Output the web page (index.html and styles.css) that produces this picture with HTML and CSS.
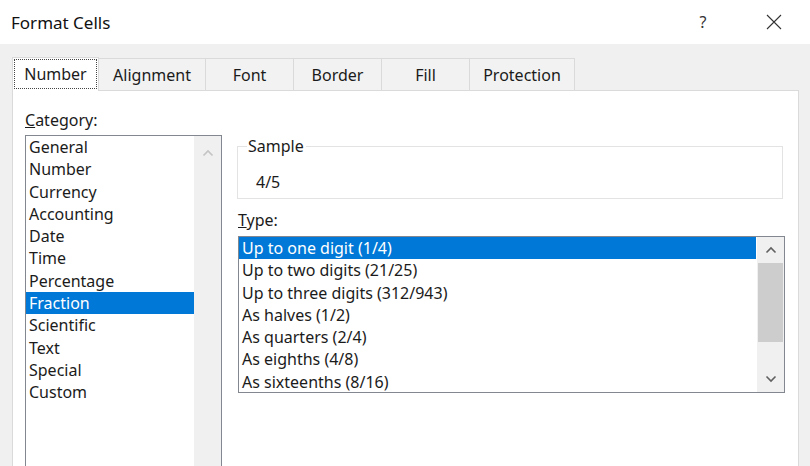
FILE: index.html
```html
<!DOCTYPE html>
<html>
<head>
<meta charset="utf-8">
<link rel="stylesheet" href="styles.css">
</head>
<body>
<div class="dialog">
  <div class="titlebar">
    <div class="title">Format Cells</div>
    <div class="help">?</div>
    <div class="close">
      <svg width="16" height="16" viewBox="0 0 16 16"><path d="M1 1 L15 15 M15 1 L1 15" stroke="#333" stroke-width="1.1" fill="none"/></svg>
    </div>
  </div>
  <div class="tabs">
    <div class="tab active">Number</div>
    <div class="tab w-align">Alignment</div>
    <div class="tab w-font">Font</div>
    <div class="tab w-border">Border</div>
    <div class="tab w-fill">Fill</div>
    <div class="tab w-prot">Protection</div>
  </div>
  <div class="panel">
    <div class="leftcol">
      <div class="label cat-label"><u>C</u>ategory:</div>
      <div class="listbox catlist">
        <div class="items">
          <div class="item">General</div>
          <div class="item">Number</div>
          <div class="item">Currency</div>
          <div class="item">Accounting</div>
          <div class="item">Date</div>
          <div class="item">Time</div>
          <div class="item">Percentage</div>
          <div class="item selected">Fraction</div>
          <div class="item">Scientific</div>
          <div class="item">Text</div>
          <div class="item">Special</div>
          <div class="item">Custom</div>
        </div>
        <div class="scrollbar">
          <div class="arrow">
            <svg width="12" height="8" viewBox="0 0 12 8"><path d="M1.5 6.5 L6 2 L10.5 6.5" stroke="#c4c4c4" stroke-width="1.6" fill="none"/></svg>
          </div>
        </div>
      </div>
    </div>
    <div class="rightcol">
      <fieldset class="sample">
        <legend>Sample</legend>
        <div class="sample-value">4/5</div>
      </fieldset>
      <div class="label type-label"><u>T</u>ype:</div>
      <div class="listbox typelist">
        <div class="items">
          <div class="item selected">Up to one digit (1/4)</div>
          <div class="item">Up to two digits (21/25)</div>
          <div class="item">Up to three digits (312/943)</div>
          <div class="item">As halves (1/2)</div>
          <div class="item">As quarters (2/4)</div>
          <div class="item">As eighths (4/8)</div>
          <div class="item">As sixteenths (8/16)</div>
        </div>
        <div class="scrollbar active-sb">
          <div class="arrow">
            <svg width="12" height="8" viewBox="0 0 12 8"><path d="M1.5 6.5 L6 2 L10.5 6.5" stroke="#606060" stroke-width="1.6" fill="none"/></svg>
          </div>
          <div class="track">
            <div class="thumb"></div>
          </div>
          <div class="arrow">
            <svg width="12" height="8" viewBox="0 0 12 8"><path d="M1.5 1.5 L6 6 L10.5 1.5" stroke="#606060" stroke-width="1.6" fill="none"/></svg>
          </div>
        </div>
      </div>
    </div>
  </div>
</div>
</body>
</html>
```
FILE: styles.css
```css
* { box-sizing: border-box; }
html, body {
  margin: 0;
  padding: 0;
}
body {
  width: 810px;
  height: 466px;
  overflow: hidden;
  background: #f0f0f0;
  font-family: "Noto Sans", "Open Sans", sans-serif;
  color: #1b1b1b;
}
.dialog {
  width: 810px;
  height: 466px;
  display: flex;
  flex-direction: column;
}
.titlebar {
  height: 44px;
  background: #ffffff;
  display: flex;
  align-items: center;
  flex-shrink: 0;
}
.title {
  padding-left: 11px;
  font-size: 17px;
  color: #111;
  flex: 1;
}
.help {
  width: 20px;
  text-align: center;
  font-size: 16px;
  color: #333;
  margin-right: 53px;
}
.close {
  width: 16px;
  height: 16px;
  margin-right: 28px;
  display: flex;
}
.tabs {
  margin-top: 13px;
  height: 33px;
  padding-left: 12px;
  display: flex;
  align-items: flex-end;
  flex-shrink: 0;
}
.tab {
  height: 32px;
  background: #f2f2f2;
  border: 1px solid #dadada;
  border-bottom: none;
  border-left: none;
  font-size: 16px;
  display: flex;
  align-items: center;
  justify-content: center;
  color: #1b1b1b;
}
.tab.active {
  position: relative;
  z-index: 1;
  width: 87px;
  height: 34px;
  margin-bottom: -1px;
  background: #ffffff;
  border-left: 1px solid #dadada;
  padding-bottom: 2px;
}
.tab.active::before {
  content: "";
  position: absolute;
  left: 1px;
  right: 1px;
  top: 1px;
  bottom: 2px;
  border: 1px dotted #444;
}
.w-align { width: 107px; }
.w-font { width: 88px; }
.w-border { width: 88px; }
.w-fill { width: 88px; }
.w-prot { width: 105px; }
.panel {
  margin-left: 12px;
  width: 787px;
  flex: 1;
  background: #ffffff;
  border: 1px solid #dadada;
  padding: 18px 0 0 12px;
  display: flex;
}
.label {
  font-size: 16px;
  line-height: 21px;
  height: 21px;
}
.cat-label {
  margin-top: 1px;
}
.leftcol {
  width: 197px;
  flex-shrink: 0;
}
.listbox {
  border: 1px solid #828790;
  background: #fff;
  display: flex;
}
.catlist {
  margin-top: 4px;
  height: 340px;
}
.items {
  flex: 1;
  display: flex;
  flex-direction: column;
}
.item {
  height: 22.3px;
  line-height: 22.3px;
  font-size: 16px;
  padding-left: 3px;
  white-space: nowrap;
}
.item.selected {
  background: #0078d7;
  color: #ffffff;
}
.scrollbar {
  width: 27px;
  background: #f0f0f0;
  display: flex;
  flex-direction: column;
  align-items: center;
}
.arrow {
  height: 30px;
  width: 100%;
  display: flex;
  align-items: center;
  justify-content: center;
}
.catlist .arrow { height: 33px; }
.rightcol {
  margin-left: 15px;
  width: 548px;
  display: flex;
  flex-direction: column;
}
.sample {
  margin: 27px 0 0 0;
  width: 546px;
  border: 1px solid #e3e3e3;
  padding: 0 8px 6px 9px;
  min-width: 0;
}
.sample legend {
  font-size: 16px;
  line-height: 20px;
  padding: 0 2px 0 1px;
  color: #1b1b1b;
}
.sample-value {
  margin-top: 16px;
  margin-left: 9px;
  font-size: 16px;
  line-height: 20px;
}
.type-label {
  margin-top: 11px;
  margin-left: 1px;
}
.typelist {
  margin-top: 5px;
  margin-left: 1px;
  width: 547px;
  height: 157px;
}
.active-sb {
  width: 28px;
  border-left: 1px solid #ffffff;
}
.active-sb .arrow { height: 26px; flex-shrink: 0; }
.track {
  flex: 1;
  width: 100%;
  padding: 0 1px;
}
.thumb {
  height: 79px;
  background: #cdcdcd;
}
```
